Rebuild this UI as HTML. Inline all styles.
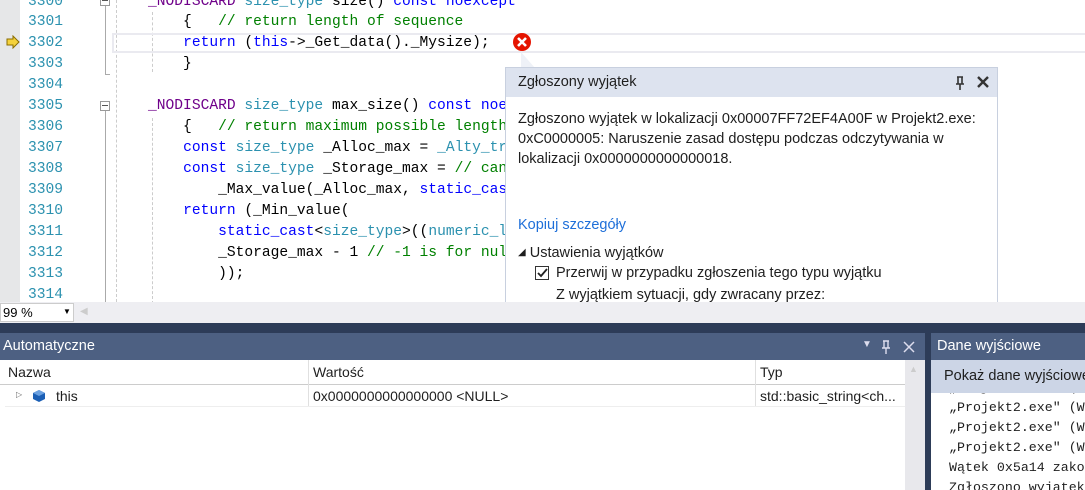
<!DOCTYPE html>
<html><head><meta charset="utf-8"><style>
*{margin:0;padding:0;box-sizing:border-box}
body{width:1085px;height:490px;overflow:hidden;background:#fff;position:relative;font-family:"Liberation Sans","DejaVu Sans",sans-serif}
.ed{position:absolute;left:0;top:0;width:1085px;height:302px;overflow:hidden;background:#fff}
.gut{position:absolute;left:0;top:0;width:20px;height:302px;background:#e6e7e8}
.ln{position:absolute;left:28px;width:40px;text-align:left;color:#2b91af;font:14.6px "Liberation Mono",monospace;height:21px;line-height:21px}
.cl{position:absolute;left:113px;white-space:pre;font:14.6px "Liberation Mono",monospace;height:21px;line-height:21px;color:#000}
.k{color:#0000ff}.t{color:#2b91af}.c{color:#008000}.m{color:#6f008a}
.fold{position:absolute;left:100px;width:10px;height:10px;border:1px solid #999;background:#fff}
.fold:after{content:"";position:absolute;left:1px;top:3px;width:6px;height:1px;background:#555}
.pop{position:absolute;left:505px;top:67px;width:493px;height:240px;background:#fff;border:1px solid #c8d0df;font-size:14.5px;color:#1e1e1e}
.ph{height:29px;background:#dde3ef;padding:6px 12px;font-size:14.5px}
</style></head><body>
<div class="ed">
<div class="gut"></div>
<div style="position:absolute;left:6px;top:35px;width:13px;height:13px">
<svg width="14" height="14" viewBox="0 0 14 14"><path d="M1 4h6V1l6 6-6 6V10H1z" fill="#f5d23c" stroke="#8a6d00" stroke-width="1"/></svg></div>
<div style="position:absolute;left:105px;top:0;width:1px;height:74px;background:#aaa"></div>
<div style="position:absolute;left:105px;top:74px;width:5px;height:1px;background:#aaa"></div>
<div style="position:absolute;left:105px;top:106px;width:1px;height:200px;background:#aaa"></div>
<div class="fold" style="top:-4px"></div>
<div class="fold" style="top:101px"></div>
<div style="position:absolute;left:116px;top:0;height:302px;border-left:1px dashed #ccc"></div>
<div style="position:absolute;left:152px;top:12px;height:60px;border-left:1px dashed #ccc"></div>
<div style="position:absolute;left:152px;top:118px;height:186px;border-left:1px dashed #ccc"></div>
<div style="position:absolute;left:112px;top:33px;width:980px;height:20px;border:2px solid #eaeaf0;border-right:none"></div>

<div class="ln" style="top:-8px">3300</div>
<div class="ln" style="top:12px">3301</div>
<div class="ln" style="top:33px">3302</div>
<div class="ln" style="top:54px">3303</div>
<div class="ln" style="top:75px">3304</div>
<div class="ln" style="top:96px">3305</div>
<div class="ln" style="top:117px">3306</div>
<div class="ln" style="top:138px">3307</div>
<div class="ln" style="top:159px">3308</div>
<div class="ln" style="top:180px">3309</div>
<div class="ln" style="top:201px">3310</div>
<div class="ln" style="top:222px">3311</div>
<div class="ln" style="top:243px">3312</div>
<div class="ln" style="top:264px">3313</div>
<div class="ln" style="top:285px">3314</div>

<div class="cl" style="top:-8px">    <span class="m">_NODISCARD</span> <span class="t">size_type</span> size() <span class="k">const</span> <span class="k">noexcept</span></div>
<div class="cl" style="top:12px">        {   <span class="c">// return length of sequence</span></div>
<div class="cl" style="top:33px">        <span class="k">return</span> (<span class="k">this</span>-&gt;_Get_data()._Mysize);</div>
<div class="cl" style="top:54px">        }</div>
<div class="cl" style="top:96px">    <span class="m">_NODISCARD</span> <span class="t">size_type</span> max_size() <span class="k">const</span> <span class="k">noexcept</span></div>
<div class="cl" style="top:117px">        {   <span class="c">// return maximum possible length of sequence</span></div>
<div class="cl" style="top:138px">        <span class="k">const</span> <span class="t">size_type</span> _Alloc_max = <span class="t">_Alty_traits</span>::max_size();</div>
<div class="cl" style="top:159px">        <span class="k">const</span> <span class="t">size_type</span> _Storage_max = <span class="c">// can always store small string</span></div>
<div class="cl" style="top:180px">            _Max_value(_Alloc_max, <span class="k">static_cast</span>&lt;<span class="t">size_type</span>&gt;(_BUF_SIZE));</div>
<div class="cl" style="top:201px">        <span class="k">return</span> (_Min_value(</div>
<div class="cl" style="top:222px">            <span class="k">static_cast</span>&lt;<span class="t">size_type</span>&gt;((<span class="t">numeric_limits</span>&lt;<span class="t">difference_type</span>&gt;::max)()),</div>
<div class="cl" style="top:243px">            _Storage_max - 1 <span class="c">// -1 is for null terminator</span></div>
<div class="cl" style="top:264px">            ));</div>

<div style="position:absolute;left:512px;top:32px;width:20px;height:20px">
<svg width="20" height="20" viewBox="0 0 20 20"><circle cx="10" cy="10" r="9" fill="#e51400"/><path d="M6 6l8 8M14 6l-8 8" stroke="#fff" stroke-width="2.6"/></svg></div>
<svg style="position:absolute;left:518px;top:52px" width="20" height="16"><path d="M3 0v16h14z" fill="#eef1f7"/></svg>

<div class="pop">
<div class="ph">Zgłoszony wyjątek
<svg style="position:absolute;left:448px;top:8px" width="12" height="14" viewBox="0 0 12 14"><path d="M3 1h6M4 1v7h4V1M2 8h8M6 8v6" stroke="#333" stroke-width="1.6" fill="none"/></svg>
<svg style="position:absolute;left:470px;top:7px" width="14" height="14"><path d="M2 2l10 10M12 2L2 12" stroke="#333" stroke-width="2.4"/></svg>
</div>
<div style="padding:12px 12px 0 12px;line-height:20px">Zgłoszono wyjątek w lokalizacji 0x00007FF72EF4A00F w Projekt2.exe: 0xC0000005: Naruszenie zasad dostępu podczas odczytywania w lokalizacji 0x0000000000000018.</div>
<div style="position:absolute;left:12px;top:149px;color:#1e6fd9">Kopiuj szczegóły</div>
<div style="position:absolute;left:12px;top:177px"><span style="font-size:10px;position:relative;top:-2px">&#9698;</span> Ustawienia wyjątków</div>
<div style="position:absolute;left:29px;top:198px;width:14px;height:14px;border:1px solid #333;background:#fff"><svg width="12" height="12" style="position:absolute;left:0;top:0"><path d="M2 6l3 3 6-7" stroke="#222" stroke-width="1.8" fill="none"/></svg></div>
<div style="position:absolute;left:50px;top:197px">Przerwij w przypadku zgłoszenia tego typu wyjątku</div>
<div style="position:absolute;left:50px;top:219px">Z wyjątkiem sytuacji, gdy zwracany przez:</div>
</div>
</div>

<div style="position:absolute;left:0;top:302px;width:1085px;height:21px;background:#eeeef2"></div>
<div style="position:absolute;left:0;top:303px;width:74px;height:19px;background:#fff;border:1px solid #ccc;font-size:13px;padding:1px 2px">99 %<span style="position:absolute;left:62px;top:3px;font-size:8px">&#9660;</span></div>
<div style="position:absolute;left:80px;top:306px;font-size:10px;color:#ccc">&#9664;</div>
<div style="position:absolute;left:0;top:323px;width:1085px;height:167px;background:#2d3c58"></div>

<div style="position:absolute;left:0;top:333px;width:925px;height:27px;background:#4d6082;color:#fff;font-size:14.5px;padding:5px 3px">Automatyczne
<span style="position:absolute;left:862px;top:6px;font-size:10px;color:#dde">&#9660;</span>
<svg style="position:absolute;left:880px;top:7px" width="12" height="14"><path d="M3 1h6M4 1v7h4V1M2 8h8M6 8v6" stroke="#dde" stroke-width="1.4" fill="none"/></svg>
<svg style="position:absolute;left:903px;top:8px" width="12" height="12"><path d="M1 1l10 10M11 1L1 11" stroke="#dde" stroke-width="1.5"/></svg></div>
<div style="position:absolute;left:0;top:360px;width:925px;height:130px;background:#fff;font-size:14px;color:#1e1e1e">
<div style="position:absolute;left:0;top:0;width:905px;height:25px;border-bottom:1px solid #ccc"></div>
<div style="position:absolute;left:8px;top:4px">Nazwa</div>
<div style="position:absolute;top:0;width:1px;height:47px;background:#e0e0e0;left:308px"></div>
<div style="position:absolute;left:313px;top:4px">Wartość</div>
<div style="position:absolute;left:755px;top:0;width:1px;height:47px;background:#e0e0e0"></div>
<div style="position:absolute;left:760px;top:4px">Typ</div>
<div style="position:absolute;left:5px;top:46px;width:900px;height:1px;background:#eee"></div>
<div style="position:absolute;left:16px;top:30px;font-size:8px;color:#666">&#9655;</div>
<svg style="position:absolute;left:32px;top:29px" width="14" height="14"><path d="M7 1l6 3v6l-6 3-6-3V4z" fill="#1b5fb5"/><path d="M7 1l6 3-6 3-6-3z" fill="#6aa0e0"/></svg>
<div style="position:absolute;left:56px;top:28px">this</div>
<div style="position:absolute;left:313px;top:28px">0x0000000000000000 &lt;NULL&gt;</div>
<div style="position:absolute;left:760px;top:28px">std::basic_string&lt;ch...</div>
<div style="position:absolute;left:905px;top:0;width:20px;height:130px;background:#e8e8ec"></div>
<div style="position:absolute;left:909px;top:4px;font-size:9px;color:#ccc">&#9650;</div>
</div>

<div style="position:absolute;left:931px;top:333px;width:154px;height:27px;background:#4d6082;color:#fff;font-size:14.5px;padding:5px 6px;white-space:nowrap">Dane wyjściowe</div>
<div style="position:absolute;left:931px;top:360px;width:154px;height:130px;background:#fff;overflow:hidden">
<div style="position:absolute;left:0;top:0;width:154px;height:130px;font:13.3px 'Liberation Mono',monospace;line-height:20px;white-space:pre;padding-left:18px;padding-top:18px;color:#1e1e1e">„Projekt2.exe" (Win32)
„Projekt2.exe" (Win32)
„Projekt2.exe" (Win32)
„Projekt2.exe" (Win32)
Wątek 0x5a14 zakończył
Zgłoszono wyjątek</div>
<div style="position:absolute;left:0;top:0;width:154px;height:33px;background:#ccd5e6;font-size:14.5px;padding:8px 13px;white-space:nowrap;color:#1e1e1e">Pokaż dane wyjściowe z: Debugowanie</div>
</div>
</body></html>
